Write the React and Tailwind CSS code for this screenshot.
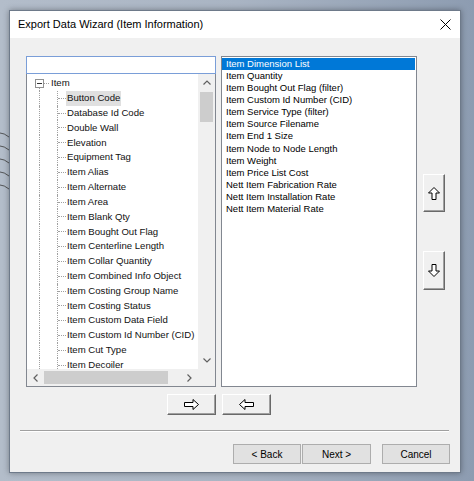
import React from "react";

const treeItems = [
  "Button Code",
  "Database Id Code",
  "Double Wall",
  "Elevation",
  "Equipment Tag",
  "Item Alias",
  "Item Alternate",
  "Item Area",
  "Item Blank Qty",
  "Item Bought Out Flag",
  "Item Centerline Length",
  "Item Collar Quantity",
  "Item Combined Info Object",
  "Item Costing Group Name",
  "Item Costing Status",
  "Item Custom Data Field",
  "Item Custom Id Number (CID)",
  "Item Cut Type",
  "Item Decoiler",
];

const exportFields = [
  "Item Dimension List",
  "Item Quantity",
  "Item Bought Out Flag (filter)",
  "Item Custom Id Number (CID)",
  "Item Service Type (filter)",
  "Item Source Filename",
  "Item End 1 Size",
  "Item Node to Node Length",
  "Item Weight",
  "Item Price List Cost",
  "Nett Item Fabrication Rate",
  "Nett Item Installation Rate",
  "Nett Item Material Rate",
];

const font = { fontFamily: '"Liberation Sans", Arial, sans-serif' };

// thin scrollbar chevrons
const Chevron = ({ dir }) => {
  const pts = {
    up: "0.5,4.5 4,1 7.5,4.5",
    down: "0.5,0.5 4,4 7.5,0.5",
    left: "4.5,0.5 1,4 4.5,7.5",
    right: "0.5,0.5 4,4 0.5,7.5",
  }[dir];
  const vertical = dir === "up" || dir === "down";
  return (
    <svg width={vertical ? 8 : 5} height={vertical ? 5 : 8}>
      <polyline points={pts} fill="none" stroke="#606060" strokeWidth="1.2" />
    </svg>
  );
};

// hollow block arrow used on the move buttons
const BlockArrow = ({ dir }) => {
  if (dir === "up" || dir === "down") {
    const pts =
      dir === "up"
        ? "6,0.5 11.5,6 8,6 8,12.5 4,12.5 4,6 0.5,6"
        : "6,12.5 11.5,7 8,7 8,0.5 4,0.5 4,7 0.5,7";
    return (
      <svg width="12" height="13">
        <polygon points={pts} fill="#fff" stroke="#000" strokeWidth="1" />
      </svg>
    );
  }
  const pts =
    dir === "right"
      ? "14.5,5.5 9,0.5 9,3.5 0.5,3.5 0.5,7.5 9,7.5 9,10.5"
      : "0.5,5.5 6,0.5 6,3.5 14.5,3.5 14.5,7.5 6,7.5 6,10.5";
  return (
    <svg width="15" height="11">
      <polygon points={pts} fill="#fff" stroke="#000" strokeWidth="1" />
    </svg>
  );
};

const ClassicButton = ({ className, children }) => (
  <div
    className={`flex items-center justify-center bg-[#f0f0f0] border border-t-white border-l-white border-r-[#696969] border-b-[#696969] shadow-[inset_-1px_-1px_0_#a0a0a0] ${className}`}
  >
    {children}
  </div>
);

const DialogButton = ({ className, children }) => (
  <div
    className={`flex items-center justify-center h-[20px] bg-[#e1e1e1] border border-[#adadad] text-[10px] text-black ${className}`}
    style={font}
  >
    {children}
  </div>
);

const TreeRow = ({ label, selected }) => (
  <div className="flex h-[14.84px] shrink-0">
    <div className="w-[12px] shrink-0" />
    <div className="w-[18px] shrink-0 border-l border-dotted border-[#a0a0a0]" />
    <div className="w-[9px] shrink-0 flex items-center border-l border-dotted border-[#a0a0a0]">
      <div className="w-[8px] border-t border-dotted border-[#a0a0a0]" />
    </div>
    <div
      className={`flex items-center px-[1px] whitespace-nowrap text-[9.6px] text-[#111] ${
        selected ? "bg-[#e0e0e0]" : ""
      }`}
      style={font}
    >
      {label}
    </div>
  </div>
);

const ItemTree = () => (
  <div className="flex flex-col h-[313px] border border-t-0 border-[#828790] bg-white">
    <div className="flex h-[295px]">
      <div className="flex-1 overflow-hidden pt-[2px] flex flex-col">
        {/* root node */}
        <div className="flex h-[14.84px] shrink-0">
          <div className="w-[8px] shrink-0" />
          <div className="flex flex-col w-[9px] shrink-0">
            <div className="flex-1" />
            <div className="h-[9px] border border-[#919191] flex items-center justify-center">
              <div className="w-[5px] h-px bg-[#333]" />
            </div>
            <div className="flex-1 ml-[4px] border-l border-dotted border-[#a0a0a0]" />
          </div>
          <div className="w-[6px] flex items-center">
            <div className="w-[5px] border-t border-dotted border-[#a0a0a0]" />
          </div>
          <div className="flex items-center pl-[1px] text-[9.6px] text-[#111]" style={font}>
            Item
          </div>
        </div>
        {treeItems.map((t, i) => (
          <TreeRow key={t} label={t} selected={i === 0} />
        ))}
      </div>
      {/* vertical scrollbar */}
      <div className="w-[17px] flex flex-col bg-[#f0f0f0]">
        <div className="h-[17px] flex items-center justify-center">
          <Chevron dir="up" />
        </div>
        <div className="flex-1 flex flex-col pt-px">
          <div className="h-[30px] mx-[2px] bg-[#cdcdcd]" />
        </div>
        <div className="h-[17px] flex items-center justify-center">
          <Chevron dir="down" />
        </div>
      </div>
    </div>
    {/* horizontal scrollbar */}
    <div className="flex h-[17px] bg-[#f0f0f0]">
      <div className="w-[17px] flex items-center justify-center">
        <Chevron dir="left" />
      </div>
      <div className="flex-1 flex items-stretch py-[2px]">
        <div className="w-[124px] bg-[#cdcdcd]" />
      </div>
      <div className="w-[17px] flex items-center justify-center">
        <Chevron dir="right" />
      </div>
      <div className="w-[17px]" />
    </div>
  </div>
);

export default function App() {
  return (
    <div className="flex w-[474px] h-[481px] overflow-hidden bg-gradient-to-r from-[#b3bdca] via-[#a9b4c3] to-[#8d9cb1]">
      {/* strip of the window behind */}
      <div className="w-[9px] shrink-0 pt-[125px]">
        <svg width="9" height="70">
          {[8, 21, 34, 47, 60].map((y) => (
            <path key={y} d={`M0 ${y} Q4 ${y} 9 ${y + 4}`} fill="none" stroke="#3a3a3a" strokeWidth="0.8" />
          ))}
        </svg>
      </div>

      <div className="pt-[10px]">
        <div className="w-[452px] h-[463px] flex flex-col border border-[#6e7a8a] bg-[#f0f0f0] shadow-[0_0_6px_rgba(0,0,0,0.35)]">
          {/* title bar */}
          <div className="h-[27px] bg-white flex items-center justify-between pl-[8px]">
            <span className="text-[11px] text-black" style={font}>
              Export Data Wizard (Item Information)
            </span>
            <div className="w-[30px] h-full flex items-center justify-center">
              <svg width="11" height="11">
                <path d="M0.5 0.5 L10.5 10.5 M10.5 0.5 L0.5 10.5" stroke="#000" strokeWidth="1" />
              </svg>
            </div>
          </div>

          {/* body */}
          <div className="flex-1 flex flex-col pt-[18px]">
            <div className="flex pl-[16px] h-[331px]">
              <div className="w-[190px] flex flex-col">
                <div className="h-[18px] bg-white border border-[#7a9ed8]" />
                <ItemTree />
              </div>

              <div className="ml-[5px] w-[196px] h-full border border-[#828790] bg-white pt-px">
                {exportFields.map((f, i) => (
                  <div
                    key={f}
                    className={`h-[12.1px] mr-px pl-[4px] flex items-center whitespace-nowrap text-[9.5px] ${
                      i === 0 ? "bg-[#0078d7] text-white" : "text-black"
                    }`}
                    style={font}
                  >
                    {f}
                  </div>
                ))}
              </div>

              <div className="ml-[6px] w-[22px] flex flex-col pt-[118px] gap-[39px]">
                <ClassicButton className="h-[38px]">
                  <BlockArrow dir="up" />
                </ClassicButton>
                <ClassicButton className="h-[39px]">
                  <BlockArrow dir="down" />
                </ClassicButton>
              </div>
            </div>

            <div className="flex pl-[157px] mt-[7px] gap-[6px]">
              <ClassicButton className="w-[49px] h-[21px]">
                <BlockArrow dir="right" />
              </ClassicButton>
              <ClassicButton className="w-[49px] h-[21px]">
                <BlockArrow dir="left" />
              </ClassicButton>
            </div>

            <div className="mt-[15px] ml-[10px] w-[429px] h-[2px] border-t border-t-[#a0a0a0] border-b border-b-white" />

            <div className="flex justify-end pr-[10px] mt-[12px]">
              <DialogButton className="w-[68px]">&lt; Back</DialogButton>
              <DialogButton className="w-[69px] ml-px">Next &gt;</DialogButton>
              <DialogButton className="w-[68px] ml-[11px]">Cancel</DialogButton>
            </div>
          </div>
        </div>
      </div>
    </div>
  );
}
